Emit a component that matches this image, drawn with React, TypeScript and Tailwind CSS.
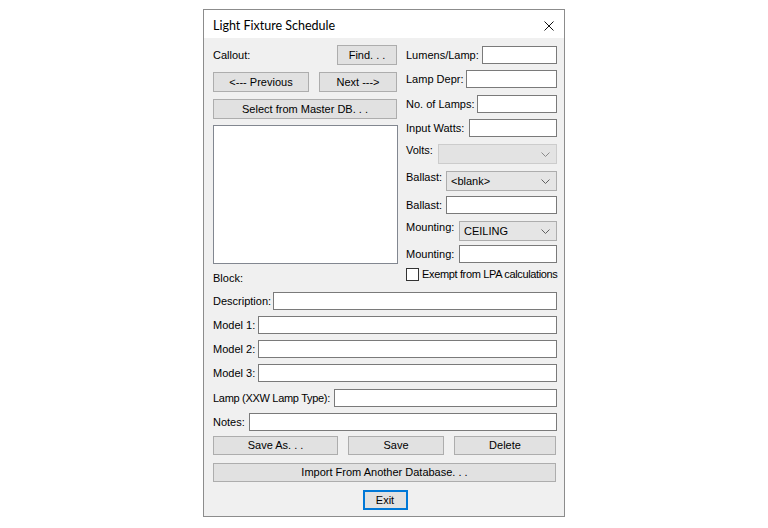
import type { ReactNode } from 'react'

const UI_FONT = "font-['Liberation_Sans',Arial,sans-serif] text-[11px] leading-[13px] text-black"

function Btn({ children, className = '' }: { children: ReactNode; className?: string }) {
  return (
    <div className={`flex items-center justify-center whitespace-nowrap bg-[#e1e1e1] border border-[#adadad] ${className}`}>
      {children}
    </div>
  )
}

function TextBox({ className = '' }: { className?: string }) {
  return <div className={`h-[18px] min-w-0 bg-white border border-[#7a7a7a] ${className}`} />
}

function Chevron({ color = '#606060' }: { color?: string }) {
  return (
    <svg width="9" height="5" viewBox="0 0 9 5" fill="none">
      <path d="M0.5 0.5L4.5 4.5L8.5 0.5" stroke={color} strokeWidth="1" />
    </svg>
  )
}

function Combo({ value, disabled = false, className = '' }: { value?: string; disabled?: boolean; className?: string }) {
  return (
    <div
      className={`h-[20px] min-w-0 flex items-center justify-between pl-[4px] pr-[6px] border ${
        disabled ? 'bg-[#e3e3e3] border-[#cccccc]' : 'bg-[#e5e5e5] border-[#adadad]'
      } ${className}`}
    >
      <span>{value}</span>
      <Chevron color={disabled ? '#8a8a8a' : '#606060'} />
    </div>
  )
}

// label + field, label column has a fixed width so fields start where the form had them
function FieldRow({ label, labelW, mt, children }: { label: string; labelW: string; mt: string; children: ReactNode }) {
  return (
    <div className={`flex items-center ${mt}`}>
      <span className={`shrink-0 whitespace-nowrap ${labelW}`}>{label}</span>
      {children}
    </div>
  )
}

export default function App() {
  return (
    <div className="w-[768px] h-[528px] bg-white flex justify-center pt-[9px]">
      <div className={`w-[362px] h-[508px] border border-[#8c8c8c] flex flex-col bg-[#f0f0f0] ${UI_FONT}`}>
        {/* Title bar */}
        <div className="h-[28px] shrink-0 bg-white flex items-center justify-between pl-[9px] pr-[10px]">
          <span className="font-['Lato',sans-serif] text-[12.5px] leading-[16px] mt-[3px]">Light Fixture Schedule</span>
          <svg width="10" height="10" viewBox="0 0 10 10" fill="none" className="mt-[3px]">
            <path d="M0.5 0.5L9.5 9.5M9.5 0.5L0.5 9.5" stroke="#111" strokeWidth="1" />
          </svg>
        </div>

        {/* Body */}
        <div className="flex-1 flex flex-col pl-[9px] pr-[7px] pt-[7px]">
          <div className="flex items-start gap-[8px]">
            {/* Left column */}
            <div className="w-[185px] shrink-0 flex flex-col">
              <div className="w-[184px] h-[20px] flex items-center justify-between">
                <span>Callout:</span>
                <Btn className="w-[60px] h-[20px]">Find. . .</Btn>
              </div>
              <div className="w-[184px] mt-[7px] flex justify-between">
                <Btn className="w-[96px] h-[20px]">&lt;--- Previous</Btn>
                <Btn className="w-[78px] h-[20px]">Next ---&gt;</Btn>
              </div>
              <Btn className="w-[184px] h-[20px] mt-[7px]">Select from Master DB. . .</Btn>
              <div className="w-[185px] h-[139px] mt-[6px] bg-white border border-[#828790]" />
              <span className="mt-[8px]">Block:</span>
            </div>

            {/* Right column */}
            <div className="flex-1 min-w-0 flex flex-col">
              <FieldRow label="Lumens/Lamp:" labelW="w-[76px]" mt="mt-[1px]">
                <TextBox className="flex-1" />
              </FieldRow>
              <FieldRow label="Lamp Depr:" labelW="w-[60px]" mt="mt-[6px]">
                <TextBox className="flex-1" />
              </FieldRow>
              <FieldRow label="No. of Lamps:" labelW="w-[71px]" mt="mt-[7px]">
                <TextBox className="flex-1" />
              </FieldRow>
              <FieldRow label="Input Watts:" labelW="w-[63px]" mt="mt-[6px]">
                <TextBox className="flex-1" />
              </FieldRow>
              <div className="flex items-start mt-[7px]">
                <span className="w-[32px] shrink-0">Volts:</span>
                <Combo disabled className="flex-1" />
              </div>
              <div className="flex items-start mt-[7px]">
                <span className="w-[40px] shrink-0">Ballast:</span>
                <Combo value="<blank>" className="flex-1" />
              </div>
              <FieldRow label="Ballast:" labelW="w-[40px]" mt="mt-[5px]">
                <TextBox className="flex-1" />
              </FieldRow>
              <div className="flex items-start mt-[7px]">
                <span className="w-[53px] shrink-0">Mounting:</span>
                <Combo value="CEILING" className="flex-1" />
              </div>
              <FieldRow label="Mounting:" labelW="w-[53px]" mt="mt-[4px]">
                <TextBox className="flex-1" />
              </FieldRow>
              <div className="flex items-center mt-[5px] h-[13px]">
                <div className="w-[13px] h-[13px] bg-white border border-[#333333] shrink-0" />
                <span className="ml-[3px] whitespace-nowrap tracking-[-0.35px]">Exempt from LPA calculations</span>
              </div>
            </div>
          </div>

          {/* Lower fields */}
          <FieldRow label="Description:" labelW="w-[60px]" mt="mt-[7px]">
            <TextBox className="flex-1" />
          </FieldRow>
          <FieldRow label="Model 1:" labelW="w-[45px]" mt="mt-[6px]">
            <TextBox className="flex-1" />
          </FieldRow>
          <FieldRow label="Model 2:" labelW="w-[45px]" mt="mt-[6px]">
            <TextBox className="flex-1" />
          </FieldRow>
          <FieldRow label="Model 3:" labelW="w-[45px]" mt="mt-[6px]">
            <TextBox className="flex-1" />
          </FieldRow>
          <div className="flex items-center mt-[7px]">
            <span className="w-[121px] shrink-0 whitespace-nowrap tracking-[-0.3px]">Lamp (XXW Lamp Type):</span>
            <TextBox className="flex-1" />
          </div>
          <FieldRow label="Notes:" labelW="w-[36px]" mt="mt-[6px]">
            <TextBox className="flex-1" />
          </FieldRow>

          <div className="flex mt-[5px] gap-[10px]">
            <Btn className="w-[125px] h-[19px]">Save As. . .</Btn>
            <Btn className="w-[96px] h-[19px]">Save</Btn>
            <Btn className="w-[102px] h-[19px]">Delete</Btn>
          </div>
          <Btn className="w-[343px] h-[19px] mt-[8px]">Import From Another Database. . .</Btn>
          <div className="flex justify-center mt-[8px]">
            <div className="w-[45px] h-[20px] flex items-center justify-center bg-[#e1e1e1] border-2 border-[#0078d7]">
              Exit
            </div>
          </div>
        </div>
      </div>
    </div>
  )
}
